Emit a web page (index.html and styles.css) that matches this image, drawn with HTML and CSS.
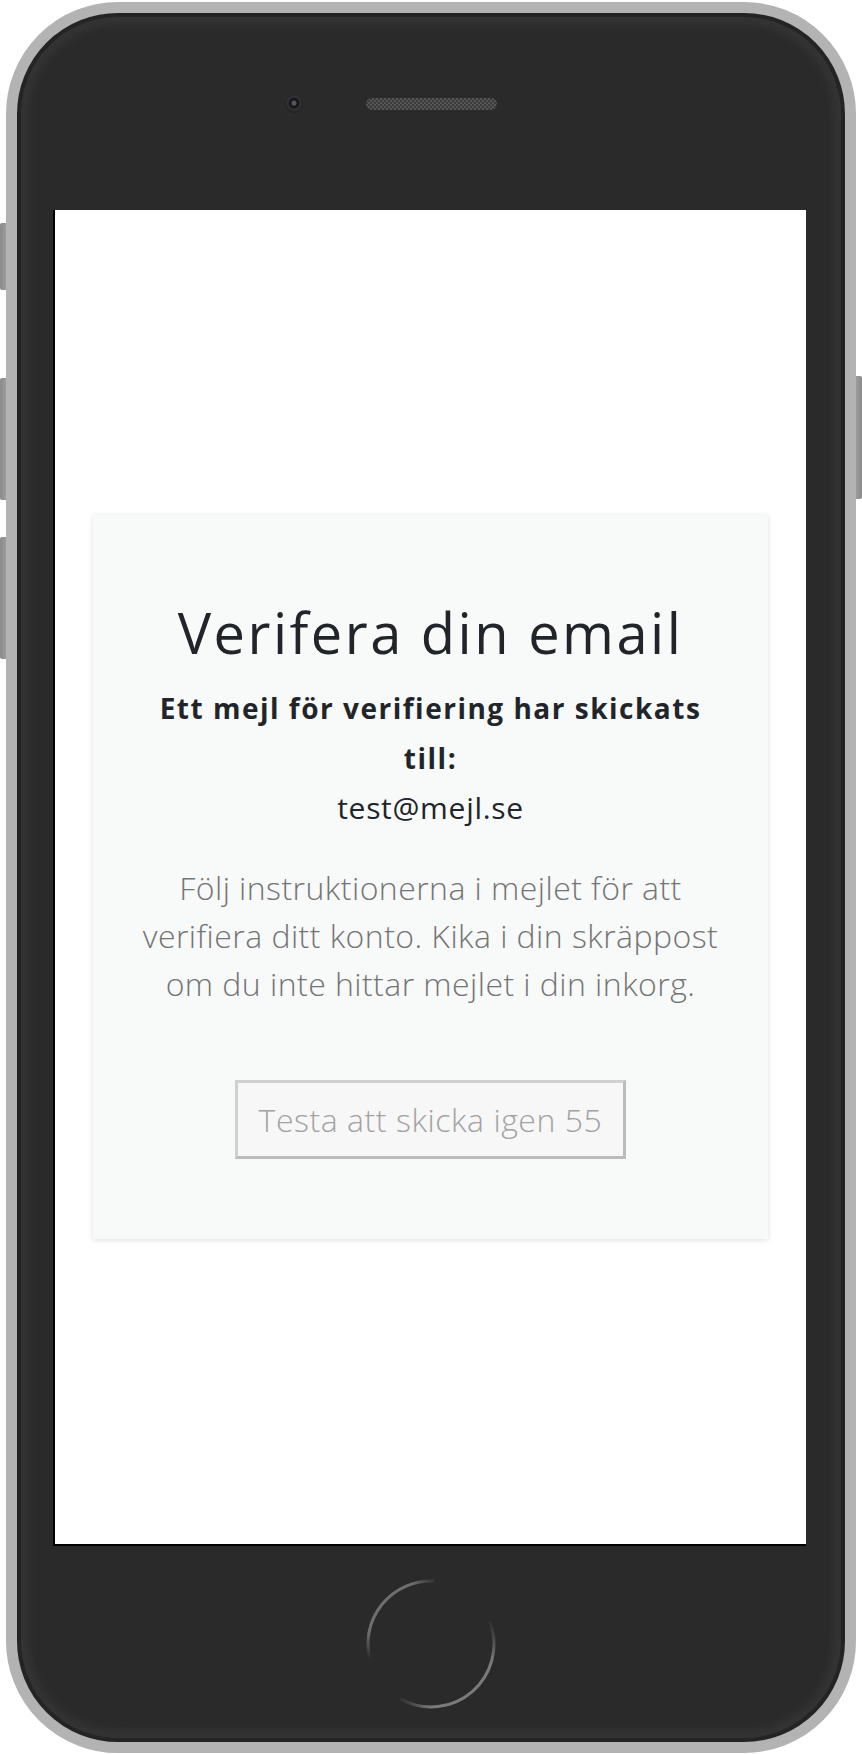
FILE: index.html
```html
<!DOCTYPE html>
<html lang="sv">
<head>
<meta charset="utf-8">
<title>Verifera din email</title>
<link rel="stylesheet" href="styles.css">
</head>
<body>
<div class="stage">
  <div class="rail rail-left">
    <span class="side-btn mute"></span>
    <span class="side-btn vol-up"></span>
    <span class="side-btn vol-down"></span>
  </div>
  <div class="phone">
    <div class="phone-top">
      <span class="camera"></span>
      <span class="speaker"></span>
    </div>
    <div class="screen">
      <div class="card">
        <h1 class="title">Verifera din email</h1>
        <p class="sent">Ett mejl för verifiering har skickats till:</p>
        <p class="email">test@mejl.se</p>
        <p class="info">Följ instruktionerna i mejlet för att verifiera ditt konto. Kika i din skräppost om du inte hittar mejlet i din inkorg.</p>
        <button class="resend" disabled>Testa att skicka igen 55</button>
      </div>
    </div>
    <div class="phone-bottom">
      <svg class="home" width="130" height="130" viewBox="0 0 130 130" aria-hidden="true">
        <defs>
          <linearGradient id="arcA" gradientUnits="userSpaceOnUse" x1="4" y1="81" x2="67" y2="2">
            <stop offset="0" stop-color="#6e6e6e" stop-opacity="0"/>
            <stop offset="0.2" stop-color="#6e6e6e"/>
            <stop offset="0.85" stop-color="#6e6e6e"/>
            <stop offset="1" stop-color="#6e6e6e" stop-opacity="0.2"/>
          </linearGradient>
          <linearGradient id="arcB" gradientUnits="userSpaceOnUse" x1="124" y1="43" x2="35" y2="121">
            <stop offset="0" stop-color="#7a7a7a" stop-opacity="0.1"/>
            <stop offset="0.2" stop-color="#7a7a7a"/>
            <stop offset="0.85" stop-color="#7a7a7a"/>
            <stop offset="1" stop-color="#7a7a7a" stop-opacity="0.1"/>
          </linearGradient>
        </defs>
        <path class="arc-a" d="M4.1 81.3 A63 63 0 0 1 67.2 2.1" />
        <path class="arc-b" d="M124.2 43.5 A63 63 0 0 1 35.4 120.6" />
      </svg>
    </div>
  </div>
  <div class="rail rail-right">
    <span class="side-btn power"></span>
  </div>
</div>
</body>
</html>
```

FILE: styles.css
```css
html, body {
  margin: 0;
  padding: 0;
  background: #ffffff;
}

.stage {
  display: flex;
  align-items: flex-start;
  width: 862px;
  height: 1754px;
}

.rail {
  width: 6px;
  display: flex;
  flex-direction: column;
}

.side-btn {
  display: block;
  width: 6px;
  background: linear-gradient(to right, #8a8a8a, #9c9c9c);
  border-radius: 2px 0 0 2px;
}

.rail-right .side-btn {
  border-radius: 0 2px 2px 0;
  background: linear-gradient(to left, #8a8a8a, #9c9c9c);
}

.mute { margin-top: 223px; height: 67px; }
.vol-up { margin-top: 88px; height: 122px; }
.vol-down { margin-top: 37px; height: 122px; }
.power { margin-top: 376px; height: 123px; }

.phone {
  box-sizing: border-box;
  margin-top: 2px;
  width: 850px;
  height: 1751px;
  border: 11px solid #b3b3b3;
  border-radius: 112px;
  background: #2a2a2a;
  box-shadow:
    inset 0 0 0 4px #242424,
    inset 0 0 8px 12px #343434;
  display: flex;
  flex-direction: column;
}

.phone-top {
  height: 197px;
  display: flex;
  align-items: center;
  padding-left: 268px;
  padding-bottom: 16px;
  box-sizing: border-box;
}

.camera {
  width: 18px;
  height: 18px;
  border-radius: 50%;
  background: radial-gradient(circle at 50% 45%, #55555e 0 2px, #18181d 3px 5px, #34343a 6px, #232323 9px);
}

.speaker {
  margin-left: 63px;
  width: 131px;
  height: 12px;
  border-radius: 6px;
  background: repeating-conic-gradient(#555555 0 25%, #3a3a3a 0 50%) 0 0 / 4px 4px;
}

.screen {
  margin-left: 36px;
  width: 753px;
  height: 1336px;
  box-sizing: border-box;
  border-left: 2px solid #000;
  border-bottom: 2px solid #000;
  background: #ffffff;
  display: flex;
  align-items: center;
  justify-content: center;
}

.card {
  box-sizing: border-box;
  width: 675px;
  height: 724px;
  background: #f8f9f9;
  box-shadow: 0 1px 5px rgba(40, 50, 90, 0.16);
  padding: 84px 48px 0;
  text-align: center;
  font-family: "Open Sans", Lato, sans-serif;
  color: #212529;
  display: flex;
  flex-direction: column;
  align-items: center;
}

.title {
  margin: 0 0 17px;
  font-size: 56px;
  line-height: 67px;
  font-weight: 500;
  letter-spacing: 2.5px;
}

.sent {
  margin: 0;
  font-size: 28px;
  line-height: 50px;
  font-weight: 700;
  letter-spacing: 1.5px;
}

.email {
  margin: 0;
  font-size: 30px;
  line-height: 50px;
  font-weight: 400;
  letter-spacing: 0.7px;
}

.info {
  margin: 31px 0 72px;
  font-size: 32px;
  line-height: 48px;
  font-weight: 300;
  color: #747474;
  letter-spacing: 0.45px;
}

.resend {
  box-sizing: border-box;
  width: 391px;
  height: 79px;
  border: 3px solid;
  border-color: #d0d0d0 #bcbcbc #bcbcbc #d0d0d0;
  background: #f7f7f7;
  color: #a2a2a2;
  font-family: "Open Sans", Lato, sans-serif;
  font-size: 32px;
  font-weight: 300;
  letter-spacing: 0.55px;
  padding: 0;
}

.phone-bottom {
  flex: 1;
  display: flex;
  align-items: center;
  justify-content: center;
}

.home path {
  fill: none;
  stroke-width: 3;
  stroke-linecap: round;
}

.home .arc-a { stroke: url(#arcA); }
.home .arc-b { stroke: url(#arcB); }
```
